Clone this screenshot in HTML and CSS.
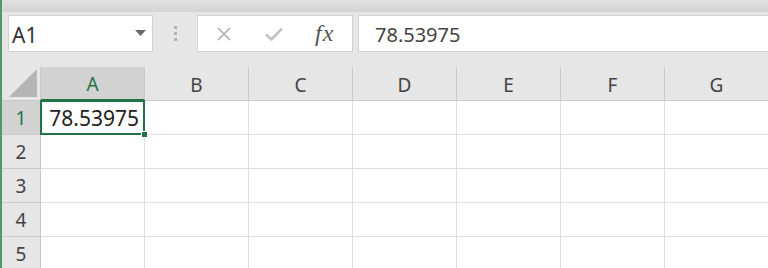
FILE: index.html
```html
<!DOCTYPE html>
<html>
<head>
<meta charset="utf-8">
<link rel="stylesheet" href="styles.css">
</head>
<body>
<div class="app">
  <div class="topstrip"></div>
  <div class="fbar">
    <div class="namebox">
      <span class="nb-text">A1</span>
      <svg class="nb-arrow" width="11" height="6" viewBox="0 0 11 6"><path d="M0 0H11L5.5 6Z" fill="#6a6a6a"/></svg>
    </div>
    <div class="grip"><i></i><i></i><i></i></div>
    <div class="btns">
      <svg class="ic-x" width="14" height="14" viewBox="0 0 14 14"><path d="M1 1L13 13M13 1L1 13" stroke="#b9b9b9" stroke-width="1.8" fill="none"/></svg>
      <svg class="ic-ok" width="18" height="14" viewBox="0 0 18 14"><path d="M1 7.5L6.5 12.5L17 1.5" stroke="#c2c2c2" stroke-width="2.6" fill="none"/></svg>
      <span class="ic-fx">fx</span>
    </div>
    <div class="formula">78.53975</div>
  </div>
  <div class="sheet">
    <div class="hd corner"><svg width="28" height="28" viewBox="0 0 28 28"><path d="M28 0V28H0Z" fill="#b5b5b5"/></svg></div>
    <div class="hd col sel-col">A</div>
    <div class="hd col">B</div>
    <div class="hd col">C</div>
    <div class="hd col">D</div>
    <div class="hd col">E</div>
    <div class="hd col">F</div>
    <div class="hd col">G</div>

    <div class="hd row sel-row">1</div>
    <div class="cell active">78.53975<span class="handle"></span></div>
    <div class="cell"></div><div class="cell"></div><div class="cell"></div><div class="cell"></div><div class="cell"></div><div class="cell"></div>

    <div class="hd row">2</div>
    <div class="cell"></div><div class="cell"></div><div class="cell"></div><div class="cell"></div><div class="cell"></div><div class="cell"></div><div class="cell"></div>

    <div class="hd row">3</div>
    <div class="cell"></div><div class="cell"></div><div class="cell"></div><div class="cell"></div><div class="cell"></div><div class="cell"></div><div class="cell"></div>

    <div class="hd row">4</div>
    <div class="cell"></div><div class="cell"></div><div class="cell"></div><div class="cell"></div><div class="cell"></div><div class="cell"></div><div class="cell"></div>

    <div class="hd row">5</div>
    <div class="cell"></div><div class="cell"></div><div class="cell"></div><div class="cell"></div><div class="cell"></div><div class="cell"></div><div class="cell"></div>
  </div>
</div>
</body>
</html>
```
FILE: styles.css
```css
* { box-sizing: border-box; }
html, body {
  margin: 0;
  padding: 0;
  width: 768px;
  height: 268px;
  overflow: hidden;
  background: #e6e6e6;
  font-family: "Noto Sans", "Noto Sans CJK JP", sans-serif;
}
.app {
  border-left: 2px solid #4e9a6c;
  height: 268px;
  overflow: hidden;
}
.topstrip {
  height: 12px;
  background: linear-gradient(#e2e2e2, #d3d3d3);
}
.fbar {
  display: flex;
  align-items: stretch;
  height: 37px;
  margin-top: 3px;
  padding-left: 6px;
}
.namebox {
  width: 145px;
  background: #fff;
  border: 1px solid #d2d2d2;
  display: flex;
  align-items: center;
  justify-content: space-between;
  padding: 0 6px 0 3px;
}
.nb-text {
  font-size: 21px;
  color: #333;
  line-height: 1;
  padding-top: 4px;
}
.nb-arrow { margin-top: -1px; }
.grip {
  width: 44px;
  display: flex;
  flex-direction: column;
  align-items: center;
  justify-content: center;
  gap: 3px;
}
.grip i {
  display: block;
  width: 3px;
  height: 3px;
  background: #b3b3b3;
}
.btns {
  width: 156px;
  background: #fff;
  border: 1px solid #d2d2d2;
  display: flex;
  align-items: center;
  padding-left: 19px;
}
.ic-x { margin-right: 34px; }
.ic-ok { margin-right: 32px; margin-top: 1px; }
.ic-fx {
  font-family: "Liberation Serif", serif;
  font-style: italic;
  font-size: 24px;
  color: #555;
  line-height: 1;
  letter-spacing: 1px;
  margin-top: -2px;
}
.formula {
  flex: 1;
  margin-left: 5px;
  background: #fff;
  border: 1px solid #d2d2d2;
  border-right: none;
  font-size: 20px;
  color: #444;
  display: flex;
  align-items: center;
  padding-left: 16px;
  padding-top: 1px;
}
.sheet {
  margin-top: 15px;
  display: grid;
  grid-template-columns: 39px repeat(7, 104px);
  grid-auto-rows: 34px;
  background: #fff;
}
.hd {
  background: #e6e6e6;
  border-right: 1px solid #c9c9c9;
  border-bottom: 1px solid #c9c9c9;
  display: flex;
  align-items: center;
  justify-content: center;
  color: #444;
  font-size: 19px;
}
.corner {
  align-items: flex-end;
  justify-content: flex-end;
  padding: 0 3px 3px 0;
}
.col { padding-top: 2px; }
.row { padding-top: 1px; }
.sel-col {
  background: #d2d2d2;
  color: #217346;
  border-bottom: 2px solid #217346;
}
.sel-row {
  background: #d2d2d2;
  color: #217346;
}
.cell {
  border-right: 1px solid #dedede;
  border-bottom: 1px solid #dedede;
  background: #fff;
}
.active {
  position: relative;
  font-size: 21px;
  color: #222;
  display: flex;
  align-items: center;
  justify-content: flex-end;
  padding-right: 5px;
  padding-top: 1px;
}
.active::before {
  content: "";
  position: absolute;
  left: -1px;
  top: -1px;
  right: -1px;
  bottom: -1px;
  border: 2px solid #217346;
}
.handle {
  position: absolute;
  right: -4px;
  bottom: -4px;
  width: 7px;
  height: 7px;
  background: #217346;
  border: 1px solid #fff;
}
```
